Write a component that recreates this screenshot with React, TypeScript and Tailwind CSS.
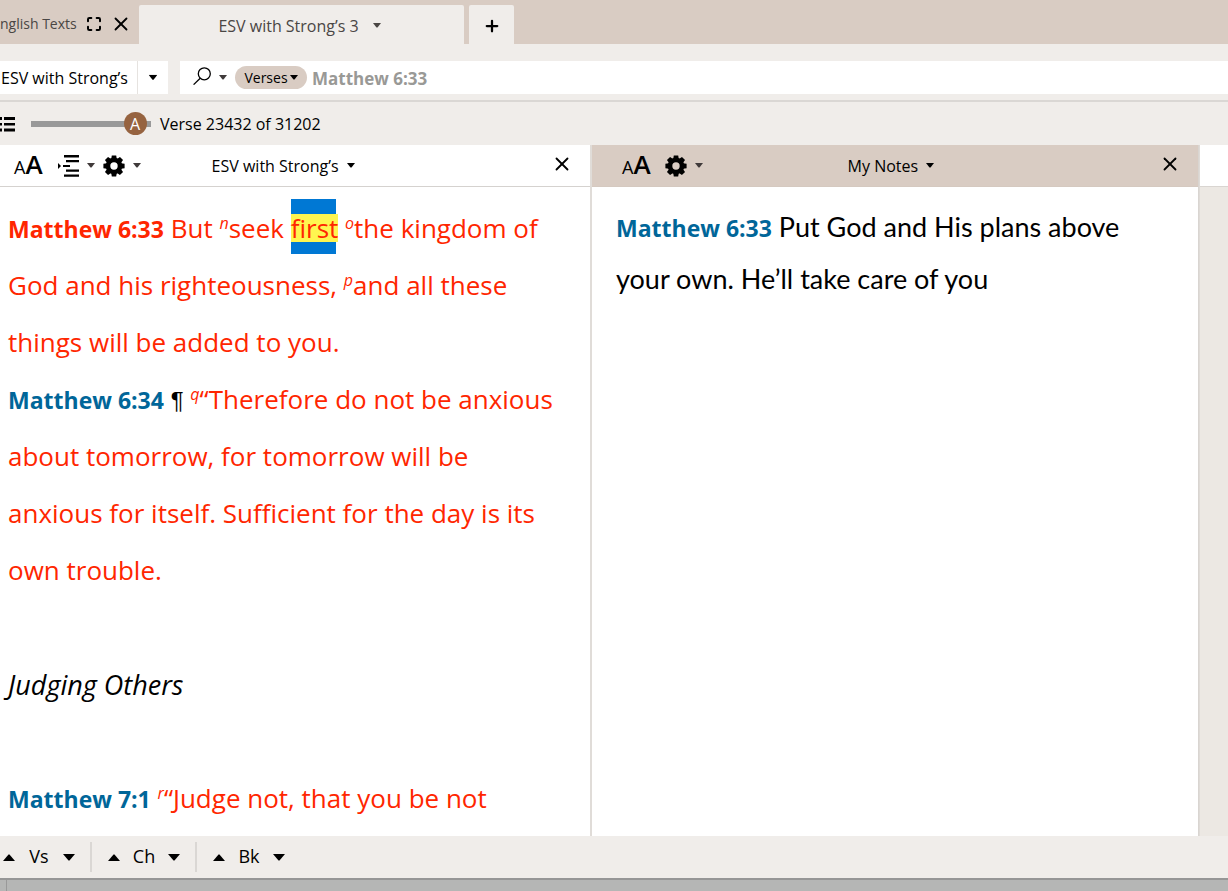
import React, { useState } from 'react';
import { Maximize, Plus, X } from 'lucide-react';

const bookButtons = [
  { id: 'verse', label: 'Vs', name: 'verse' },
  { id: 'chapter', label: 'Ch', name: 'chapter' },
  { id: 'book', label: 'Bk', name: 'book' },
];

const gearTeeth = [0, 45, 90, 135, 180, 225, 270, 315];

function Caret({ className = '' }: { className?: string }) {
  return (
    <svg viewBox="0 0 8 5" className={`h-[5px] w-2 shrink-0 ${className}`} fill="currentColor">
      <path d="M0 0h8L4.5 4.5h-1z" />
    </svg>
  );
}

function Triangle({ up = false }: { up?: boolean }) {
  return (
    <svg viewBox="0 0 12 7" className={`h-[7px] w-3 shrink-0 ${up ? 'rotate-180' : ''}`} fill="currentColor">
      <path d="M0 0h12L6.5 6.5h-1z" />
    </svg>
  );
}

function SearchGlyph() {
  return (
    <svg viewBox="0 0 18 18" className="mb-[3px] h-[18px] w-[18px]" fill="none" stroke="currentColor" strokeWidth="1.3">
      <circle cx="11.3" cy="6.8" r="6" />
      <path d="M7.2 11.2L.6 17.6" />
    </svg>
  );
}

function IndentGlyph() {
  return (
    <svg viewBox="0 0 22 22" className="h-[22px] w-[22px]" fill="currentColor">
      <path d="M7 0h15v2.4H7zM9 5h13v2.2H9zM6 10h7v2H6zM9 14.6h13v2.2H9zM7 19.4h15v2.4H7z" />
      <path d="M1 8l3 3-3 3z" />
    </svg>
  );
}

function ListGlyph() {
  return (
    <svg viewBox="0 0 15 15" className="h-[15px] w-[15px]" fill="currentColor">
      <path d="M0 0h2v3H0zM4 0h11v3H4zM0 6h2v2.5H0zM4 6h11v2.5H4zM0 11.5h2v3H0zM4 11.5h11v3H4z" />
    </svg>
  );
}

function GearGlyph() {
  return (
    <svg viewBox="0 0 22 22" className="h-[22px] w-[22px]" fill="currentColor">
      <circle cx="11" cy="11" r="6" fill="none" stroke="currentColor" strokeWidth="4.6" />
      {gearTeeth.map((angle) => (
        <path key={angle} d="M8.2 4L8.8.4h4.4l.6 3.6z" transform={`rotate(${angle} 11 11)`} />
      ))}
    </svg>
  );
}

function TextSizeButton() {
  return (
    <button aria-label="Text size" className="flex items-baseline leading-6">
      <span className="text-lg leading-6 font-medium">A</span>
      <span className="text-[26px] leading-6 font-semibold">A</span>
    </button>
  );
}

function GearButton() {
  return (
    <button aria-label="Pane settings" className="flex items-center gap-2">
      <GearGlyph />
      <Caret className="text-[#403a3a]" />
    </button>
  );
}

function Note({ children }: { children: string }) {
  return <sup className="top-[-9px] text-base italic leading-none">{children}</sup>;
}

function Reference({ children, active = false }: { children: string; active?: boolean }) {
  return (
    <b className={`font-['Open_Sans'] text-[23px] leading-none ${active ? 'text-[#ff2600]' : 'text-[#006699]'}`}>
      {children}
    </b>
  );
}

function App() {
  const [query, setQuery] = useState('Matthew 6:33');
  const [position, setPosition] = useState(96);

  return (
    <div className="flex min-h-screen flex-col overflow-hidden bg-[#f0edea] font-['Open_Sans',sans-serif] text-base text-black">
      {/* Workspace tabs */}
      <header className="flex h-11 items-end bg-[#d9ccc3] text-[#4a4644]">
        <div className="flex h-11 w-[139px] items-center pt-1">
          <span className="w-[86px] text-sm whitespace-nowrap">nglish Texts</span>
          <button aria-label="Expand" className="text-black">
            <Maximize className="h-4 w-4" strokeWidth={3} />
          </button>
          <button aria-label="Close workspace" className="ml-2 text-black">
            <X className="h-[22px] w-[22px]" strokeWidth={2} />
          </button>
        </div>
        <button className="flex h-[39px] w-[325px] items-center justify-center gap-3.5 rounded-t-xs bg-[#f0edea] pt-0.5 pr-1 text-base">
          ESV with Strong’s 3
          <Caret />
        </button>
        <button aria-label="New tab" className="ml-[5px] flex h-[39px] w-[45px] items-center justify-center rounded-t-xs bg-[#f0edea] pt-0.5 text-black">
          <Plus className="h-[18px] w-[18px]" strokeWidth={3} />
        </button>
      </header>

      {/* Search bar */}
      <div className="flex h-[58px] items-start gap-3 border-b-2 border-[#dad7d4] pt-[17px]">
        <div className="relative flex h-[33px] w-[168px] items-center bg-white">
          <select aria-label="Search text" className="h-full w-full appearance-none bg-transparent pl-px">
            <option>ESV with Strong’s</option>
          </select>
          <span className="pointer-events-none absolute inset-y-0 right-0 flex w-[31px] items-center justify-center border-l border-[#e6e3e0]">
            <Caret className="scale-110" />
          </span>
        </div>
        <div className="flex h-[33px] flex-1 items-center bg-white pl-[13px]">
          <button aria-label="Search" className="flex items-center gap-2">
            <SearchGlyph />
            <Caret className="text-[#403a3a]" />
          </button>
          <button className="ml-2 flex h-[23px] w-[72px] items-center justify-center gap-0.5 rounded-full bg-[#d9ccc3] text-sm">
            Verses
            <Caret />
          </button>
          <input
            aria-label="Search for"
            value={query}
            onChange={(e) => setQuery(e.target.value)}
            className="ml-[5px] flex-1 bg-transparent pt-0.5 text-[17px] font-bold text-[#999996] outline-none"
          />
        </div>
      </div>

      {/* Position slider */}
      <div className="flex h-[43px] items-center">
        <button aria-label="Contents" className="pt-0.5">
          <ListGlyph />
        </button>
        <div className="relative ml-4 flex h-6 w-[120px] items-center">
          <input
            type="range"
            aria-label="Verse position"
            value={position}
            onChange={(e) => setPosition(Number(e.target.value))}
            className="h-[6px] w-full appearance-none bg-[#999] [&::-webkit-slider-thumb]:h-[23px] [&::-webkit-slider-thumb]:w-[23px] [&::-webkit-slider-thumb]:appearance-none [&::-webkit-slider-thumb]:rounded-full [&::-webkit-slider-thumb]:bg-[#966340]"
          />
          <span
            className="pointer-events-none absolute inset-y-0 flex w-6 items-center justify-center text-white"
            style={{ left: `${(position * 96) / 100}px` }}
          >
            A
          </span>
        </div>
        <span className="ml-[9px]">Verse 23432 of 31202</span>
      </div>

      {/* Text panes */}
      <main className="grid flex-1 grid-cols-[592fr_607fr_29px]">
        <section className="flex flex-col border-r-2 border-[#e0dcd8] bg-white">
          <div className="flex h-[42px] items-center border-b border-[#d5d2cf] pl-3.5 pr-[17px]">
            <TextSizeButton />
            <button aria-label="Paragraph layout" className="ml-3.5 flex items-center gap-2">
              <IndentGlyph />
              <Caret className="text-[#403a3a]" />
            </button>
            <div className="ml-2">
              <GearButton />
            </div>
            <button className="ml-[71px] flex items-center gap-2">
              ESV with Strong’s
              <Caret />
            </button>
            <button aria-label="Close pane" className="ml-auto pb-1">
              <X className="h-[22px] w-[22px]" strokeWidth={2} />
            </button>
          </div>
          <div className="px-2 pt-[13px] text-[26px] leading-[57px] whitespace-nowrap text-[#ff2600]">
            <p>
              <Reference active>Matthew 6:33</Reference> But <Note>n</Note>seek{' '}
              <span className="relative">
                <span className="absolute -top-[11px] right-[2px] left-0 h-[55px] bg-[#0078d4]" />
                <mark className="relative inline-block bg-[#fff550] leading-7 text-[#ff2600]">first</mark>
              </span>{' '}
              <Note>o</Note>the kingdom of
              <br />
              God and his righteousness, <Note>p</Note>and all these
              <br />
              things will be added to you.
            </p>
            <p>
              <Reference>Matthew 6:34</Reference>{' '}
              <span className="font-['Liberation_Sans'] text-2xl leading-none text-black">¶</span> <Note>q</Note>“Therefore do not be anxious
              <br />
              about tomorrow, for tomorrow will be
              <br />
              anxious for itself. Sufficient for the day is its
              <br />
              own trouble.
            </p>
            <h2 className="my-[57px] text-[27px] text-black italic">Judging Others</h2>
            <p>
              <Reference>Matthew 7:1</Reference> <Note>r</Note>“Judge not, that you be not
            </p>
          </div>
        </section>

        <section className="flex flex-col border-r border-[#d9d5d1] bg-white">
          <div className="flex h-[42px] items-center border-b border-[#d5c9c0] bg-[#d9ccc3] pl-[30px] pr-[17px]">
            <TextSizeButton />
            <div className="ml-3.5">
              <GearButton />
            </div>
            <button className="ml-[145px] flex items-center gap-2">
              My Notes
              <Caret />
            </button>
            <button aria-label="Close notes" className="ml-auto pb-1">
              <X className="h-[22px] w-[22px]" strokeWidth={2} />
            </button>
          </div>
          <p className="px-6 pt-3.5 font-['Lato'] text-[27px] leading-[52px] whitespace-nowrap">
            <Reference>Matthew 6:33</Reference> Put God and His plans above
            <br />
            your own. He’ll take care of you
          </p>
        </section>

        <aside className="border-l border-[#dfdbd7] bg-[#ece8e3]">
          <div className="h-[42px] border-b border-[#d9d5d1] bg-white" />
        </aside>
      </main>

      {/* Browse by verse, chapter and book */}
      <footer>
        <nav className="flex h-[42px] items-center">
          {bookButtons.map((item, i) => (
            <div
              key={item.id}
              className={`flex h-[30px] items-center text-lg ${i === 0 ? 'w-[90px] pl-[3px]' : 'w-[105px] border-l-2 border-[#dad7d4] pl-4'}`}
            >
              <button aria-label={`Previous ${item.name}`}>
                <Triangle up />
              </button>
              <span className="w-12 pb-0.5 text-center">{item.label}</span>
              <button aria-label={`Next ${item.name}`}>
                <Triangle />
              </button>
            </div>
          ))}
        </nav>
        <div className="h-[13px] border-t-2 border-[#969696] bg-[#b5b6b5]">
          <div className="ml-1.5 h-full border-l border-[#999]" />
        </div>
      </footer>
    </div>
  );
}

export default App;
